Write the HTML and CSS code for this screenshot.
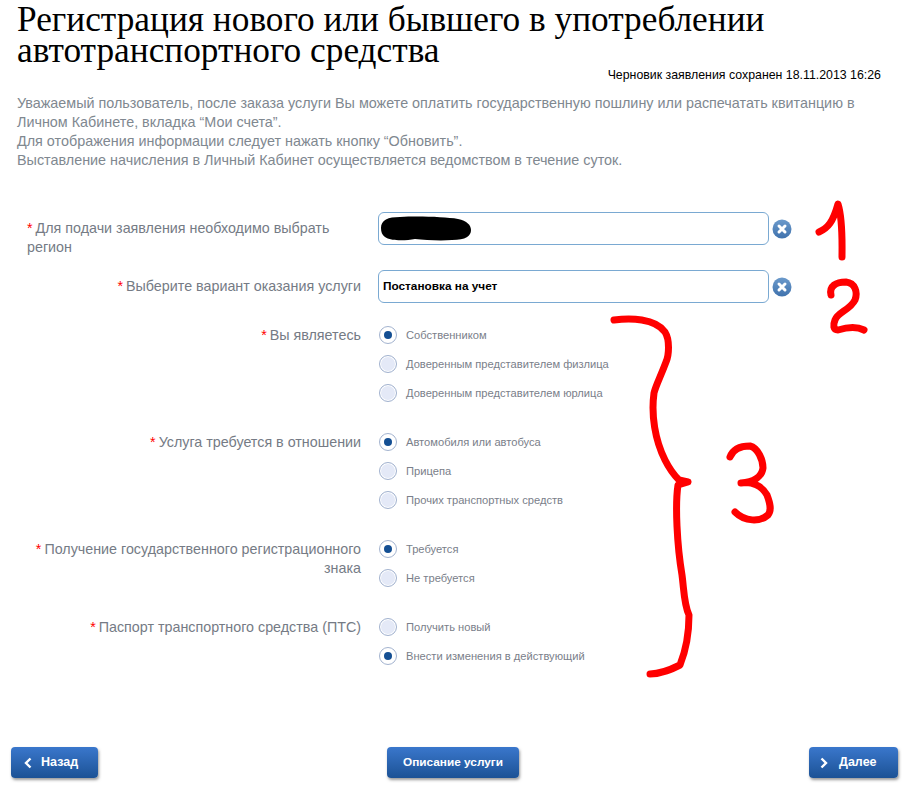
FILE: index.html
```html
<!DOCTYPE html>
<html lang="ru">
<head>
<meta charset="utf-8">
<title>Регистрация</title>
<link rel="stylesheet" href="styles.css">
</head>
<body>
<svg class="defs" width="0" height="0" aria-hidden="true"><defs><linearGradient id="clearFill" x1="0" y1="0" x2="0" y2="1"><stop offset="0" stop-color="#6c9acb"/><stop offset="1" stop-color="#3f72ad"/></linearGradient></defs></svg>
<main class="page">
  <h1 class="title">Регистрация нового или бывшего в употреблении автотранспортного средства</h1>
  <p class="saved">Черновик заявления сохранен 18.11.2013 16:26</p>
  <div class="intro">
    <p>Уважаемый пользователь, после заказа услуги Вы можете оплатить государственную пошлину или распечатать квитанцию в Личном Кабинете, вкладка “Мои счета”.</p>
    <p>Для отображения информации следует нажать кнопку “Обновить”.</p>
    <p>Выставление начисления в Личный Кабинет осуществляется ведомством в течение суток.</p>
  </div>
  <form class="form">
    <div class="row row-input row-first">
      <div class="label label-left"><span class="req">*</span>Для подачи заявления необходимо выбрать регион</div>
      <div class="field"><div class="input"></div><span class="clear"><svg viewBox="0 0 20 20" width="20" height="20"><circle cx="10" cy="10" r="9.500" fill="url(#clearFill)"/><path d="M7 7l6 6M13 7l-6 6" stroke="#fff" stroke-width="3" stroke-linecap="round"/></svg></span></div>
    </div>
    <div class="row row-input">
      <div class="label"><span class="req">*</span>Выберите вариант оказания услуги</div>
      <div class="field"><div class="input">Постановка на учет</div><span class="clear"><svg viewBox="0 0 20 20" width="20" height="20"><circle cx="10" cy="10" r="9.500" fill="url(#clearFill)"/><path d="M7 7l6 6M13 7l-6 6" stroke="#fff" stroke-width="3" stroke-linecap="round"/></svg></span></div>
    </div>
    <div class="row row-radio">
      <div class="label"><span class="req">*</span>Вы являетесь</div>
      <div class="options">
        <div class="opt on">Собственником</div>
        <div class="opt">Доверенным представителем физлица</div>
        <div class="opt">Доверенным представителем юрлица</div>
      </div>
    </div>
    <div class="row row-radio">
      <div class="label"><span class="req">*</span>Услуга требуется в отношении</div>
      <div class="options">
        <div class="opt on">Автомобиля или автобуса</div>
        <div class="opt">Прицепа</div>
        <div class="opt">Прочих транспортных средств</div>
      </div>
    </div>
    <div class="row row-radio">
      <div class="label"><span class="req">*</span>Получение государственного регистрационного знака</div>
      <div class="options">
        <div class="opt on">Требуется</div>
        <div class="opt">Не требуется</div>
      </div>
    </div>
    <div class="row row-radio">
      <div class="label"><span class="req">*</span>Паспорт транспортного средства (ПТС)</div>
      <div class="options">
        <div class="opt">Получить новый</div>
        <div class="opt on">Внести изменения в действующий</div>
      </div>
    </div>
  </form>
  <div class="actions">
    <button type="button" class="btn btn-nav btn-back"><svg viewBox="0 0 8 12" width="8" height="12"><path d="M6.500 1.500L2 6l4.500 4.500" fill="none" stroke="#fff" stroke-width="2.400"/></svg>Назад</button>
    <button type="button" class="btn btn-mid">Описание услуги</button>
    <button type="button" class="btn btn-nav btn-next"><svg viewBox="0 0 8 12" width="8" height="12"><path d="M1.500 1.500L6 6l-4.500 4.500" fill="none" stroke="#fff" stroke-width="2.400"/></svg>Далее</button>
  </div>
</main>
<svg class="marks" viewBox="0 0 905 789" width="905" height="789">
  <path class="blot" d="M381 228C381 220 388 217 400 217C420 216 445 217 458 219C467 221 471 225 471 230C471 236 466 240 452 240C440 241 425 240 415 239C405 241 390 241 385 237C382 235 381 232 381 228Z"/>
  <g class="ink">
    <path d="M819 232C828 228 833 222 838 204C843 220 842 245 842 257"/>
    <path d="M831 295C829 286 836 282 846 282C855 283 858 292 855 300C850 310 838 312 835 320C833 325 833 330 838 330C848 327 858 327 864 330"/>
    <path d="M614 320C630 318 655 318 665 332C670 340 669 355 666 362C660 378 656 385 654 393C651 415 655 440 665 460C670 470 674 475 679 480L688 482L678 485C675 505 677 545 682 575C684 590 684 605 689 615C689 635 686 650 680 665C672 669 662 674 650 674"/>
    <path d="M730 457C733 449 740 446 750 446C758 448 763 460 763 468C762 476 755 482 741 483C752 481 762 486 767 495C770 503 772 510 768 515C760 522 745 522 735 512"/>
  </g>
</svg>
</body>
</html>
```
FILE: styles.css
```css
html, body { margin: 0; padding: 0; background: #fff; }
body { width: 905px; height: 789px; position: relative; overflow: hidden; font-family: "Liberation Sans", Arial, sans-serif; }
.defs { position: absolute; }
.page { padding: 0 0 0 17px; width: 905px; box-sizing: border-box; }
.title { margin: 0; padding-top: 4px; font: 400 35.3px/31px "Liberation Serif", serif; color: #000; width: 860px; }
.saved { margin: 2px 24px 0 0; text-align: right; font-size: 12.35px; line-height: 14px; color: #000; }
.intro { margin-top: 12px; width: 860px; color: #808890; font-size: 14.36px; line-height: 19px; }
.intro p { margin: 0; }
.form { margin-top: 42px; }
.row { display: grid; grid-template-columns: 344px auto; column-gap: 17px; }
.label { color: #757b85; font-size: 14.3px; line-height: 19px; text-align: right; padding: 1px 0 0 10px; }
.label-left { text-align: left; }
.req { color: #f00; margin-right: 3px; }
.row-input { height: 55px; align-items: start; }
.row-first { height: 58px; }
.row-input .label { padding-top: 7px; }
.field { display: flex; align-items: center; gap: 3px; }
.input { width: 391px; height: 33px; box-sizing: border-box; border: 1px solid #7aa9d2; border-radius: 6px; padding: 0 9px 0 4px; font-size: 11.8px; font-weight: 700; line-height: 31px; color: #000; background: #fff; }
.clear { display: block; width: 20px; height: 20px; }
.clear svg { display: block; }
.row-radio { margin-bottom: 29px; }
.options { display: flex; flex-direction: column; gap: 9px; }
.opt { position: relative; padding-left: 28px; height: 20px; font-size: 11.15px; line-height: 20px; color: #7a808a; }
.opt::before { content: ""; position: absolute; left: 1px; top: 1px; width: 18px; height: 18px; box-sizing: border-box; border-radius: 50%; border: 1px solid #a3b3cf; background: #e4e9f7; box-shadow: inset 0 0 0 1px #fff; }
.opt.on::before { background: #fff; }
.opt.on::after { content: ""; position: absolute; left: 6px; top: 6px; width: 8px; height: 8px; border-radius: 50%; background: #144f93; }
.actions { display: flex; justify-content: space-between; margin: 81px 7px 0 -6px; }
.btn { height: 31px; border: 0; border-radius: 4px; background: linear-gradient(#3a77cc, #1c5295); box-shadow: 1px 2px 3px rgba(70,70,70,.55); color: #fff; font: 700 11.8px/31px "Liberation Sans", Arial, sans-serif; padding: 0; display: flex; align-items: center; justify-content: center; }
.btn-nav { justify-content: flex-start; font-size: 12.5px; }
.btn-back { width: 87px; gap: 9px; padding-left: 13px; }
.btn-next { width: 89px; gap: 11px; padding-left: 11px; }
.btn-mid { width: 132px; margin-left: -1px; }
.marks { position: absolute; left: 0; top: 0; pointer-events: none; }
.blot { fill: #000; }
.ink { fill: none; stroke: #f00; stroke-width: 7; stroke-linecap: round; stroke-linejoin: round; }
```
